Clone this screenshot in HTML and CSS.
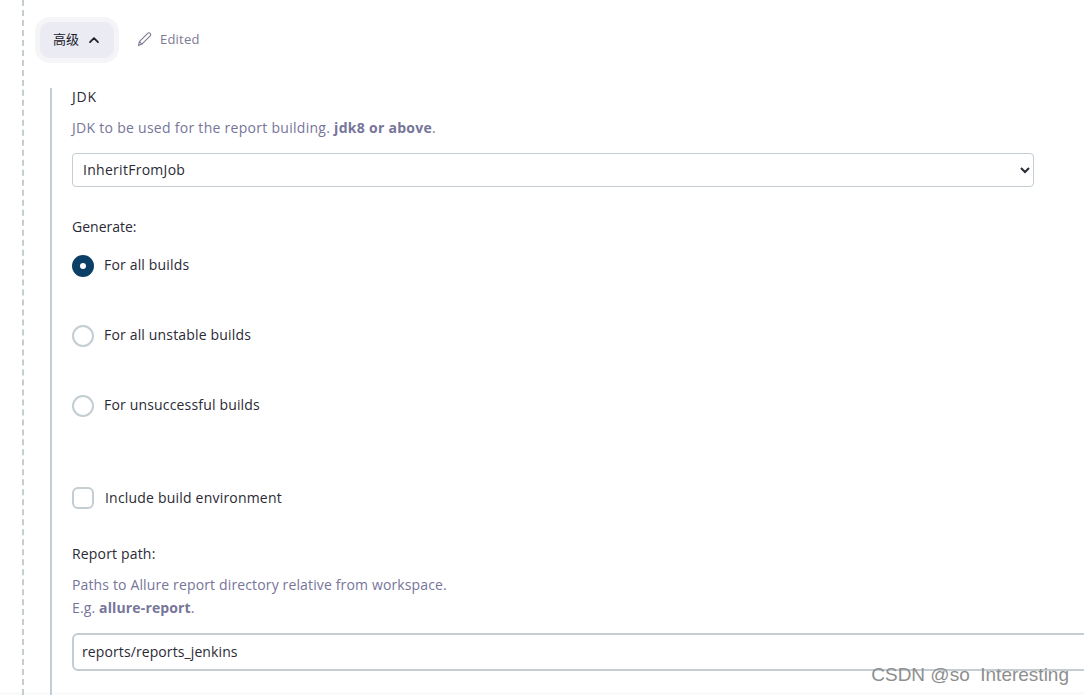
FILE: index.html
```html
<!DOCTYPE html>
<html lang="en">
<head>
<meta charset="utf-8">
<title>Advanced</title>
<link rel="stylesheet" href="styles.css">
</head>
<body>
<div class="page">
  <div class="toolbar">
    <button class="adv-btn" type="button"><span class="adv-label">高级</span>
      <svg class="chev" width="12" height="8" viewBox="0 0 12 8"><path d="M2 6.200 6 2.200l4 4" fill="none" stroke="#20202c" stroke-width="1.800" stroke-linecap="round" stroke-linejoin="round"/></svg>
    </button>
    <span class="edited">
      <svg class="pencil" width="16" height="16" viewBox="0 0 16 16"><path d="M1.500 14.500l.9-3.900 8.300-8.300c.7-.7 1.800-.7 2.500 0 .7.7.7 1.800 0 2.500l-8.300 8.300z M2.400 10.600l3 3" fill="none" stroke="#7b7a92" stroke-width="1.100" stroke-linejoin="round"/></svg>
      Edited
    </span>
  </div>
  <div class="section">
    <div class="field-label jdk">JDK</div>
    <div class="help jdk-help">JDK to be used for the report building. <b>jdk8 or above</b>.</div>
    <select class="select"><option>InheritFromJob</option></select>
    <div class="field-label generate">Generate:</div>
    <div class="radios">
      <label class="radio-row"><span class="radio on"></span><span class="radio-text">For all builds</span></label>
      <label class="radio-row"><span class="radio"></span><span class="radio-text">For all unstable builds</span></label>
      <label class="radio-row"><span class="radio"></span><span class="radio-text">For unsuccessful builds</span></label>
    </div>
    <label class="check-row"><span class="check"></span><span>Include build environment</span></label>
    <div class="field-label report">Report path:</div>
    <div class="help report-help">Paths to Allure report directory relative from workspace.<br>E.g. <b>allure-report</b>.</div>
    <div class="input">reports/reports_jenkins</div>
  </div>
</div>
<div class="watermark">CSDN @so&nbsp; Interesting</div>
</body>
</html>
```
FILE: styles.css
```css
html, body { margin: 0; height: 100%; }
body {
  width: 1084px;
  height: 695px;
  overflow: hidden;
  position: relative;
  background: #fff;
  font-family: "Open Sans", sans-serif;
  font-size: 14px;
  letter-spacing: 0.17px;
  color: #2a2a36;
}
.page {
  box-sizing: border-box;
  height: 695px;
  padding: 22px 0 0 40px;
  background: linear-gradient(#fff 692px, #fafafa 692px);
  overflow: hidden;
  position: relative;
}
.page::before {
  content: "";
  position: absolute;
  left: 22px;
  top: 0;
  bottom: 0;
  border-left: 2px dashed #c3cdd2;
}
.toolbar { display: flex; align-items: center; height: 36px; }
.adv-btn {
  display: flex;
  align-items: center;
  gap: 9px;
  box-sizing: border-box;
  width: 74px;
  height: 36px;
  padding: 0 0 0 13px;
  border: 0;
  border-radius: 10px;
  background: #ebebf3;
  box-shadow: 0 0 0 5px #f5f5f8;
  font: inherit;
  font-size: 13px;
  letter-spacing: 0;
  color: #20202c;
}
.adv-label { font-family: "Noto Sans CJK SC", sans-serif; line-height: 18px; margin-top: -2px; }
.edited {
  display: flex;
  align-items: center;
  gap: 7px;
  margin-left: 23px;
  margin-top: -3px;
  font-size: 13px;
  letter-spacing: 0.2px;
  color: #7b7a92;
}
.section {
  box-sizing: border-box;
  margin: 30px 0 0 10px;
  padding-left: 20px;
  border-left: 2px solid #c3cdd2;
  height: 620px;
  width: 1100px;
}
.field-label { line-height: 20px; }
.jdk { line-height: 18px; letter-spacing: 0.8px; }
.help { color: #76759a; line-height: 23px; letter-spacing: 0.14px; }
.help b { font-weight: 700; }
.jdk-help { margin-top: 10px; letter-spacing: 0.28px; }
.select {
  display: block;
  box-sizing: border-box;
  width: 962px;
  height: 34px;
  margin-top: 14px;
  padding: 0 6px 2px;
  border: 1px solid #c3cdd2;
  border-radius: 4px;
  background: #fff;
  font: inherit;
  letter-spacing: 0.28px;
  color: #2a2a36;
}
.generate { margin-top: 30px; letter-spacing: 0; }
.radios { display: flex; flex-direction: column; margin-top: 18px; }
.radio-row { display: flex; gap: 10px; height: 70px; line-height: 20px; }
.radio {
  box-sizing: border-box;
  width: 22px;
  height: 22px;
  border: 2px solid #c3cdd2;
  border-radius: 50%;
  background: #fff;
}
.radio.on { border: 8px solid #0b3f66; background: #fff; }
.check-row { display: flex; gap: 11px; margin-top: 22px; line-height: 20px; height: 22px; align-items: center; letter-spacing: 0.2px; }
.check {
  box-sizing: border-box;
  width: 22px;
  height: 22px;
  border: 2px solid #c3cdd2;
  border-radius: 6px;
}
.report { margin-top: 35px; }
.report-help { margin-top: 9px; }
.input {
  box-sizing: border-box;
  width: 1040px;
  height: 38px;
  margin-top: 14px;
  padding: 0 8px;
  border: 2px solid #c3cdd2;
  border-radius: 6px;
  line-height: 33px;
  letter-spacing: 0.1px;
  white-space: nowrap;
}
.watermark {
  position: absolute;
  right: 15px;
  top: 663px;
  font-family: "Liberation Sans", sans-serif;
  font-size: 19px;
  line-height: 24px;
  letter-spacing: 0;
  color: #8e8e8e;
}
```
